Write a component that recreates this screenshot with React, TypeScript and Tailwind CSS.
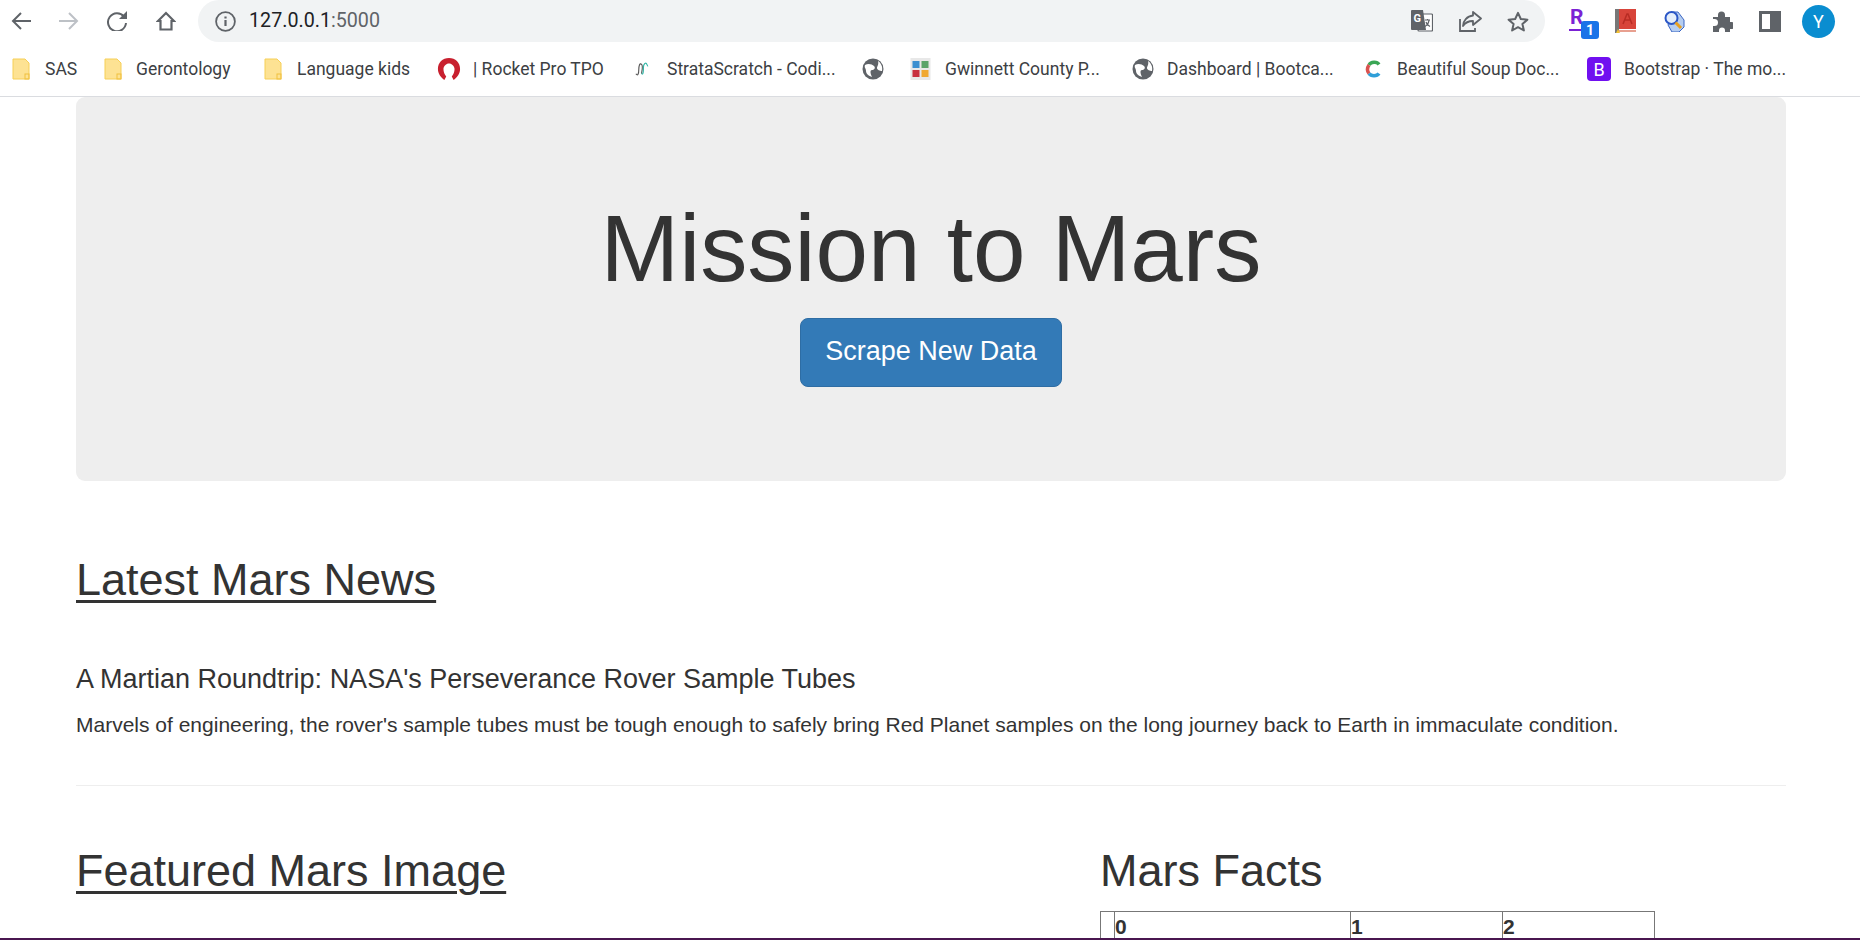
import React from "react";

const Folder = () => (
  <svg width="18" height="22" viewBox="0 0 18 22">
    <path d="M1 1h12l4 4v16H1z" fill="#fde293" stroke="#f6cf57" strokeWidth="1" />
    <rect x="13" y="16" width="4" height="5" fill="none" stroke="#f0c040" strokeWidth="1" />
  </svg>
);

const Globe = () => (
  <svg width="22" height="22" viewBox="0 0 22 22">
    <circle cx="11" cy="11" r="10.500" fill="#5f6368" />
    <path d="M3 7c3-2 7-1 9 1s0 4-2 4-2 3 0 7c-3-1-6-3-6-6s-2-3-1-6zM16 3c3 2 5 6 4 10-2 0-5-1-5-3s2-3 1-7z" fill="#fff" />
  </svg>
);

const Rocket = () => (
  <svg width="24" height="24" viewBox="0 0 26 26">
    <path d="M8 25C4 22 1 18 1 13 1 6 6 1 13 1s12 5 12 12c0 5-3 9-7 12l-2-4c2-2 3-5 3-8 0-3-3-6-6-6s-6 3-6 6c0 3 1 6 3 8z" fill="#c8202f" />
  </svg>
);

const Strata = () => (
  <svg width="15" height="18" viewBox="0 0 16 18" fill="none" strokeWidth="1.200">
    <path d="M1 14c2 3 3 0 3-4s1-8 3-6 0 8 0 10" stroke="#555" />
    <path d="M7 14c2 2 2-4 2-7s2-5 3-4 1 3 2 3" stroke="#2fb5a5" />
  </svg>
);

const Gwinnett = () => (
  <svg width="21" height="22" viewBox="0 0 20 22">
    <rect width="20" height="22" fill="#e8e8e8" />
    <rect x="2" y="3" width="7" height="7" fill="#3b8fd0" />
    <rect x="11" y="3" width="7" height="7" fill="#5aa469" />
    <rect x="2" y="12" width="7" height="7" fill="#c8303f" />
    <rect x="11" y="12" width="7" height="7" fill="#f0a830" />
  </svg>
);

const BeautifulC = () => (
  <svg width="16" height="18" viewBox="0 0 16 18" fill="none" strokeWidth="3.500">
    <path d="M14 4.500C12 1.500 6 1.500 4 5" stroke="#3aa655" />
    <path d="M4 5c-2 3-2 6 0 8.500" stroke="#d9534f" />
    <path d="M4 13.500c2 3 8 3 10 0" stroke="#2f9fd8" />
  </svg>
);

const BootstrapB = () => (
  <div className="flex h-[24px] w-[24px] items-center justify-center rounded-[4px] bg-[#7010f0] text-[18px] text-white">B</div>
);

const bookmarks: { icon: React.ReactNode; label?: string; gap: string; w: string }[] = [
  { icon: <Folder />, label: "SAS", gap: "ml-[15px]", w: "w-[92px]" },
  { icon: <Folder />, label: "Gerontology", gap: "ml-[14px]", w: "w-[160px]" },
  { icon: <Folder />, label: "Language kids", gap: "ml-[15px]", w: "w-[173px]" },
  { icon: <Rocket />, label: "| Rocket Pro TPO", gap: "ml-[12px]", w: "w-[198px]" },
  { icon: <Strata />, label: "StrataScratch - Codi...", gap: "ml-[17px]", w: "w-[227px]" },
  { icon: <Globe />, gap: "", w: "w-[48px]" },
  { icon: <Gwinnett />, label: "Gwinnett County P...", gap: "ml-[14px]", w: "w-[222px]" },
  { icon: <Globe />, label: "Dashboard | Bootca...", gap: "ml-[13px]", w: "w-[233px]" },
  { icon: <BeautifulC />, label: "Beautiful Soup Doc...", gap: "ml-[16px]", w: "w-[222px]" },
  { icon: <BootstrapB />, label: "Bootstrap · The mo...", gap: "ml-[13px]", w: "w-[210px]" },
];

const ChromeBar = () => (
  <div className="h-[97px] shrink-0 border-b border-[#dadce0] bg-white font-['Roboto',sans-serif]">
    <div className="flex h-[42px] items-center">
      <div className="flex h-[42px] w-[198px] shrink-0 items-center gap-[28px] pl-[11px]">
        <svg width="20" height="20" viewBox="0 0 20 20" fill="none" stroke="#5f6368" strokeWidth="2">
          <path d="M20 10H2M10 2l-8 8 8 8" />
        </svg>
        <svg width="20" height="20" viewBox="0 0 20 20" fill="none" stroke="#bdc1c6" strokeWidth="2">
          <path d="M0 10h18M10 2l8 8-8 8" />
        </svg>
        <svg width="21" height="20" viewBox="0 0 21 20">
          <path d="M17 5.500A9 9 0 1 0 19 12" fill="none" stroke="#5f6368" strokeWidth="2" />
          <path d="M20 0v8h-8z" fill="#5f6368" />
        </svg>
        <svg width="20" height="20" viewBox="0 0 20 20" fill="none" stroke="#5f6368" strokeWidth="2.200">
          <path d="M10 2L2 10h2.500v8.500h11V10H18z" />
        </svg>
      </div>
      <div className="flex h-[42px] w-[1347px] shrink-0 items-center rounded-full bg-[#f1f3f4] pl-[17px]">
        <svg width="21" height="21" viewBox="0 0 21 21" fill="none" stroke="#5f6368" strokeWidth="1.800">
          <circle cx="10.500" cy="10.500" r="9.400" />
          <path d="M10.500 9v6M10.500 5.500v2" strokeWidth="2.200" />
        </svg>
        <span className="ml-[13px] text-[19.700px] text-[#202124]">
          127.0.0.1<span className="text-[#5f6368]">:5000</span>
        </span>
        <div className="ml-auto flex items-center pr-[16px]">
          <svg width="22" height="22" viewBox="0 0 22 22">
            <rect x="7" y="4" width="14.500" height="17" rx="1" fill="#fff" stroke="#5f6368" strokeWidth="1.200" />
            <path d="M1 0h11l3 20H1a1 1 0 0 1-1-1V1a1 1 0 0 1 1-1z" fill="#5f6368" />
            <text x="2.500" y="12" fontSize="11" fontWeight="700" fill="#fff" fontFamily="Roboto, sans-serif">G</text>
            <path d="M14 10h5M16.500 9v1.500M18 10.500c-.5 3-2 5-4 6M15 12c.5 2 2 3.500 4 4.500" fill="none" stroke="#5f6368" strokeWidth="1.200" />
          </svg>
          <svg width="23" height="21" viewBox="0 0 23 21" fill="none" stroke="#5f6368" strokeWidth="1.800" className="ml-[26px]">
            <path d="M1 8v12h15v-3" />
            <path d="M14 1l8 6.500-8 6.500v-4c-5 0-8 2-10 5 0-5 4-10 10-10.500z" strokeLinejoin="round" />
          </svg>
          <svg width="22" height="21" viewBox="0 0 22 21" fill="none" stroke="#5f6368" strokeWidth="2" className="ml-[25px]">
            <path d="M11 1.800l2.800 6.200 6.600.7-5 4.400 1.500 6.400L11 16.200l-5.900 3.300 1.500-6.400-5-4.400 6.600-.7z" strokeLinejoin="round" />
          </svg>
        </div>
      </div>
      <div className="ml-[24px] flex items-center">
        <div className="relative h-[38px] w-[30px]">
          <span className="absolute left-[1px] top-[3px] text-[21px] font-bold leading-[25px] text-[#7b22d4]">R</span>
          <div className="absolute left-0 top-[27px] h-[2px] w-[12px] bg-[#7b22d4]" />
          <span className="absolute left-[12px] top-[19px] flex h-[18px] w-[18px] items-center justify-center rounded-[3px] bg-[#1a73e8] text-[14px] font-bold text-white">1</span>
        </div>
        <svg width="21" height="24" viewBox="0 0 21 24" className="ml-[16px]">
          <rect x="3" y="0" width="18" height="20" fill="#d8443a" />
          <rect x="0" y="0" width="4" height="24" fill="#777" />
          <rect x="4" y="20" width="17" height="1" fill="#fff" />
          <rect x="4" y="21" width="17" height="2" fill="#e8a090" />
          <path d="M1 24l2-4 2 4z" fill="#f2c230" />
          <path d="M8 15l4-10h1l4 10M10 11h5" fill="none" stroke="#b82c24" strokeWidth="1.500" />
        </svg>
        <svg width="21" height="21" viewBox="0 0 21 21" className="ml-[28px]">
          <path d="M8 1h6l6 8v7l-5 5H8l-4-7z" fill="#b5cdf0" stroke="#3b66c4" />
          <circle cx="7.500" cy="7" r="6" fill="#e4eefb" stroke="#2a56c6" strokeWidth="2" />
          <path d="M11.500 11.500l5.500 5.500" stroke="#e8a020" strokeWidth="3" />
        </svg>
        <svg width="21" height="21" viewBox="0 0 21 21" className="ml-[27px]">
          <path d="M1 6h5V4a3.500 3.500 0 0 1 7 0v2h5v5h1.500a3.500 3.500 0 0 1 0 7H18v3h-5v-1.500a3 3 0 0 0-6 0V21H1v-6h1.500a3.500 3.500 0 0 0 0-7H1z" fill="#5f6368" />
        </svg>
        <div className="ml-[26px] flex h-[21px] w-[22px] justify-end border-[3px] border-[#5f6368]">
          <div className="h-full w-[8px] bg-[#5f6368]" />
        </div>
        <div className="ml-[21px] flex h-[33px] w-[33px] items-center justify-center rounded-full bg-[#0a8dd0] text-[18px] text-white">Y</div>
      </div>
    </div>
    <div className="flex h-[54px] items-center pl-[12px] text-[17.500px] text-[#3c4043]">
      {bookmarks.map((b, i) => (
        <div key={i} className={`flex shrink-0 items-center ${b.w}`}>
          {b.icon}
          {b.label && <span className={`whitespace-nowrap ${b.gap}`}>{b.label}</span>}
        </div>
      ))}
    </div>
  </div>
);

export default function App() {
  return (
    <div className="flex h-[940px] w-full flex-col overflow-hidden bg-white font-['Liberation_Sans',Arial,sans-serif] text-[#333]">
      <ChromeBar />
      <div className="min-h-0 flex-1 overflow-hidden pl-[76px] pr-[74px]">
        <div className="flex h-[384px] flex-col items-center rounded-[9px] bg-[#eeeeee] pt-[100px]">
          <h1 className="text-[94.400px] leading-[104px]">Mission to Mars</h1>
          <button className="mt-[17px] h-[69px] w-[262px] rounded-[8px] border border-[#2e6da4] bg-[#337ab7] pb-[3px] text-[27px] text-white">
            Scrape New Data
          </button>
        </div>
        <h2 className="mt-[74px] text-[45px] leading-[50px] underline decoration-[3px] underline-offset-[5px]">Latest Mars News</h2>
        <h3 className="mt-[59px] text-[27px] leading-[30px]">A Martian Roundtrip: NASA's Perseverance Rover Sample Tubes</h3>
        <p className="mt-[17px] text-[21px] leading-[28px]">
          Marvels of engineering, the rover's sample tubes must be tough enough to safely bring Red Planet samples on the long journey back to Earth in immaculate condition.
        </p>
        <hr className="mt-[46px] border-[#eeeeee]" />
        <div className="mt-[60px] flex">
          <div className="w-[1024px] shrink-0">
            <h2 className="text-[45px] leading-[50px] underline decoration-[3px] underline-offset-[5px]">Featured Mars Image</h2>
          </div>
          <div>
            <h2 className="text-[45px] leading-[50px]">Mars Facts</h2>
            <table className="mt-[15px] w-[554px] table-fixed border-collapse border border-[#777] text-[21px] font-bold leading-[30px]">
              <thead>
                <tr>
                  <th className="w-[14px] border border-[#777]"></th>
                  <th className="w-[236px] border border-[#777] text-left">0</th>
                  <th className="w-[152px] border border-[#777] text-left">1</th>
                  <th className="w-[152px] border border-[#777] text-left">2</th>
                </tr>
              </thead>
            </table>
          </div>
        </div>
      </div>
      <div className="h-[2px] shrink-0 bg-[#4a1650]" />
    </div>
  );
}
